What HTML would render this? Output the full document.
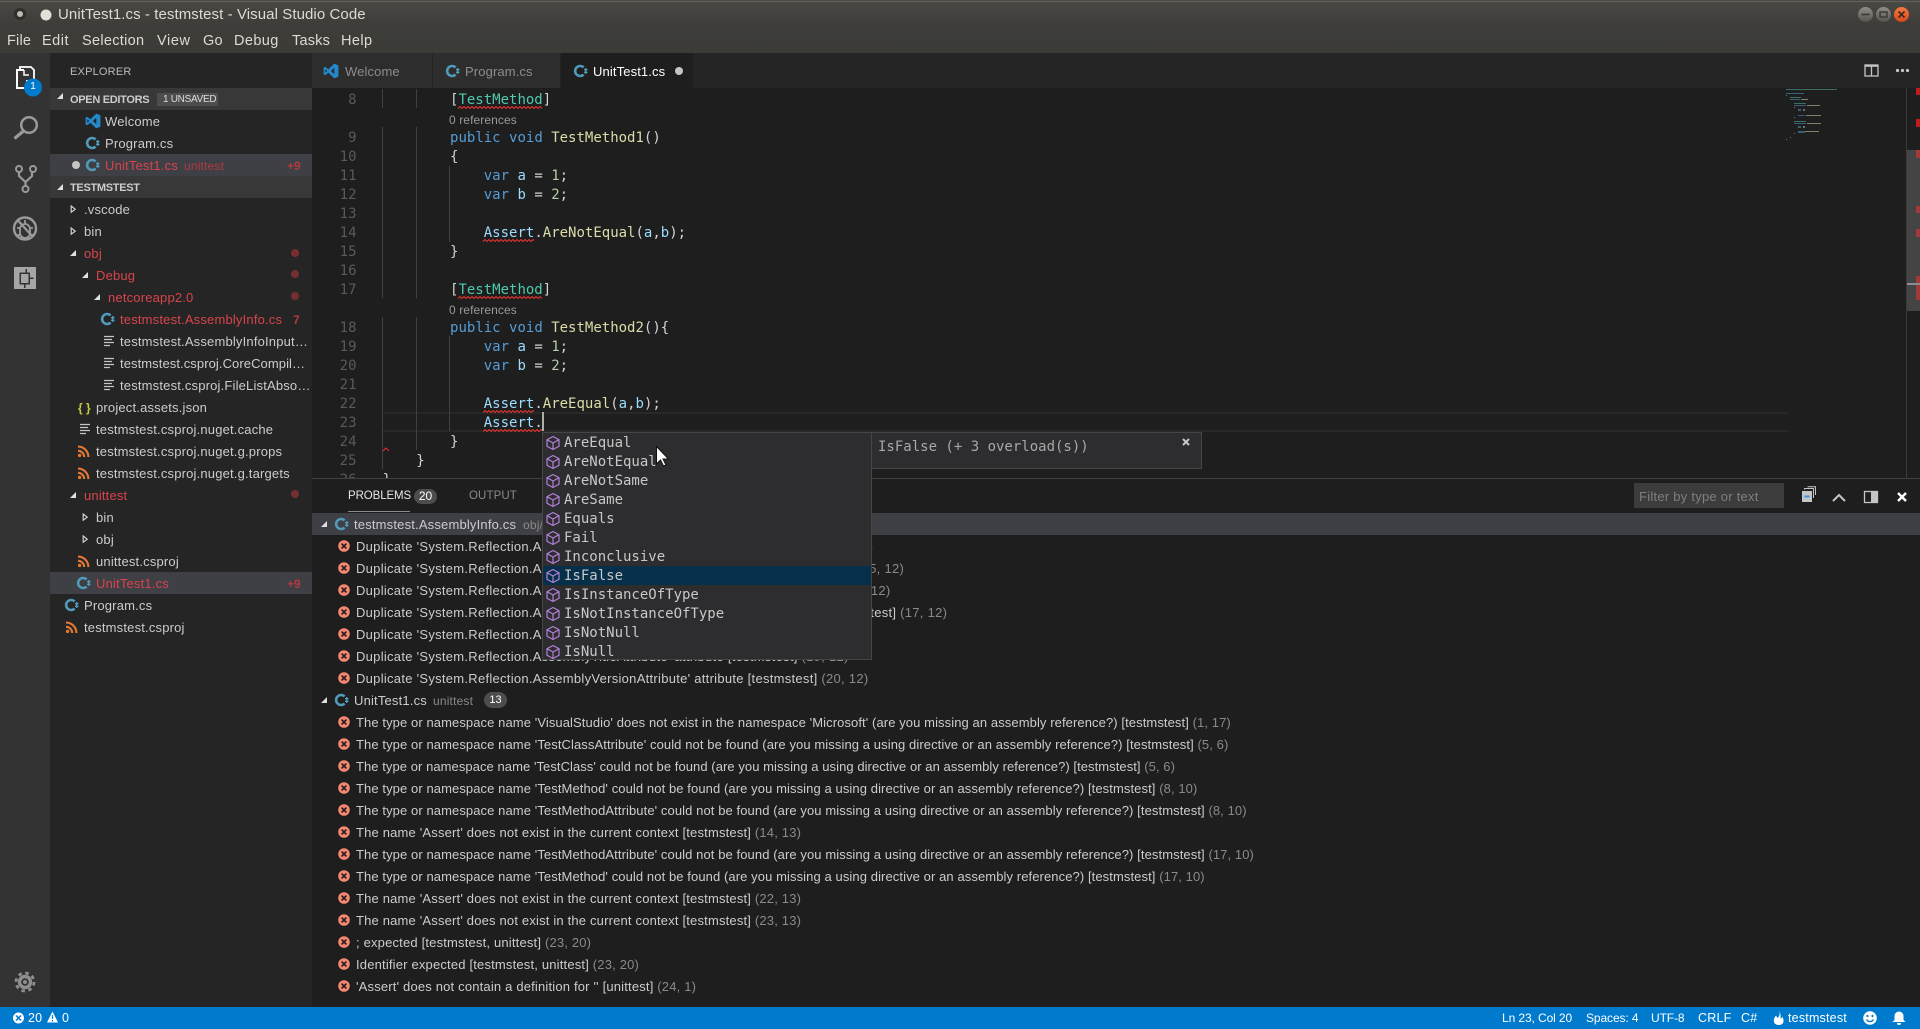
<!DOCTYPE html>
<html><head><meta charset="utf-8"><title>UnitTest1.cs - testmstest - Visual Studio Code</title>
<style>
html,body{margin:0;padding:0;background:#1e1e1e;width:1920px;height:1029px;overflow:hidden}
*{box-sizing:border-box}
body{font-family:"Liberation Sans","DejaVu Sans",sans-serif;font-size:13px;color:#ccc;position:relative}
.b{position:absolute}
.t{position:absolute;white-space:pre;line-height:22px;height:22px;letter-spacing:.18px}
.c{position:absolute;left:382.6px;margin-top:2px;white-space:pre;font:14px/19px "DejaVu Sans Mono","Liberation Mono",monospace;height:19px;color:#d4d4d4}
.n{position:absolute;left:312px;margin-top:2px;width:44.5px;text-align:right;font:14px/19px "DejaVu Sans Mono","Liberation Mono",monospace;height:19px;color:#5a5a5a}
.k{color:#569cd6}.f{color:#dcdcaa}.v{color:#9cdcfe}.u{color:#b5cea8}.g{color:#4ec9b0}
.s{position:absolute;left:564px;margin-top:1px;white-space:pre;font:14px/19px "DejaVu Sans Mono","Liberation Mono",monospace;height:19px;color:#c8c8c8}
.m{color:#dfdbd2;font-size:14.5px;line-height:27px;height:27px;top:28px;letter-spacing:.2px}
.e{color:#d9444b;margin-top:1px}
.h{font-weight:bold;font-size:11px;color:#ccc;letter-spacing:-.3px;margin-top:1px}
.w{color:#ccc;margin-top:1px}
.l{color:#8a8a8a}
.st{color:#fff;font-size:12px;letter-spacing:-.1px}
.sb{color:#fff;font-size:12.5px;letter-spacing:.2px}
.d{letter-spacing:.28px}
.lg{letter-spacing:.09px}
.lh{letter-spacing:.06px}
svg{position:absolute;overflow:visible}
.i{width:16px;height:16px}
.p{margin-top:3px}
.cb{margin-top:1px}
</style></head><body>

<svg width="0" height="0" style="position:absolute">
<defs>
<pattern id="sq" width="4" height="3" patternUnits="userSpaceOnUse"><path d="M-2 .5L0 2.5L2 .5L4 2.5L6 .5" fill="none" stroke="#e8332f" stroke-width="1"/></pattern>
<symbol id="cs" viewBox="0 0 16 16"><path d="M10.6 4.4A5 5 0 1 0 10.6 11.6" fill="none" stroke="#519aba" stroke-width="2.6"/><rect x="11" y="6" width="3.5" height="1.4" fill="#519aba"/><rect x="11" y="8.6" width="3.5" height="1.4" fill="#519aba"/><rect x="12" y="5" width="1.4" height="6" fill="#519aba"/></symbol>
<symbol id="vs" viewBox="0 0 16 16"><path fill-rule="evenodd" fill="#2489ca" d="M11.3 .6L15.4 2.4V13.6L11.3 15.4L5.4 9.8L2.2 12.3L.6 11.4V4.6L2.2 3.7L5.4 6.2ZM11.3 4.8L7.9 8L11.3 11.2ZM2.3 6.2V9.8L4.2 8Z"/></symbol>
<symbol id="rss" viewBox="0 0 16 16"><circle cx="3.6" cy="12.4" r="1.7" fill="#e37933"/><path d="M2 7.8A6.2 6.2 0 0 1 8.2 14M2 3.6A10.4 10.4 0 0 1 12.4 14" fill="none" stroke="#e37933" stroke-width="2.1"/></symbol>
<symbol id="ln" viewBox="0 0 16 16"><path d="M3 3.5H13M3 6.5H11M3 9.5H13M3 12.5H9" stroke="#c5c5c5" stroke-width="1.2" fill="none"/></symbol>
<symbol id="ex" viewBox="0 0 8 8"><path d="M1 7H7V1Z" fill="#e0e0e0"/></symbol>
<symbol id="co" viewBox="0 0 8 8"><path d="M2.2 1L6.2 4.2L2.2 7.2Z" fill="none" stroke="#d0d0d0" stroke-width="1.2"/></symbol>
<symbol id="cu" viewBox="0 0 16 16"><path d="M8 1.5L14 4.7V11.3L8 14.5L2 11.3V4.7ZM2 4.7L8 8L14 4.7M8 8V14.5" fill="none" stroke="#b180d7" stroke-width="1.2"/></symbol>
<symbol id="er" viewBox="0 0 16 16"><circle cx="8" cy="8" r="5.8" fill="#f48771"/><path d="M5.6 5.6L10.4 10.4M10.4 5.6L5.6 10.4" stroke="#1e1e1e" stroke-width="1.6"/></symbol>
</defs>
</svg>

<!-- title + menu -->
<div class="b" style="left:0;top:0;width:1920px;height:53px;background:linear-gradient(#4b4945,#3d3c38 50%,#3c3b37)"></div>
<div class="b" style="left:0;top:1px;width:1920px;height:1px;background:#64625d"></div>
<svg style="left:0;top:0" width="80" height="28"><circle cx="20" cy="14" r="6" fill="#2f2e2b"/><circle cx="20" cy="14" r="3" fill="#bdbab2"/><circle cx="46" cy="15" r="5.5" fill="#e4e0d8"/></svg>
<div class="t" style="left:58px;top:4px;color:#dfdbd2;font-size:15px;letter-spacing:.08px">UnitTest1.cs - testmstest - Visual Studio Code</div>
<div class="t m" style="left:7px">File</div>
<div class="t m" style="left:42px;letter-spacing:.5px">Edit</div>
<div class="t m" style="left:82px;letter-spacing:.3px">Selection</div>
<div class="t m" style="left:157px;letter-spacing:.6px">View</div>
<div class="t m" style="left:203px">Go</div>
<div class="t m" style="left:234px;letter-spacing:.4px">Debug</div>
<div class="t m" style="left:292px">Tasks</div>
<div class="t m" style="left:341px;letter-spacing:.4px">Help</div>
<svg style="left:1850px;top:0" width="70" height="28">
<defs><linearGradient id="gb" x1="0" y1="0" x2="0" y2="1"><stop offset="0" stop-color="#8f8d87"/><stop offset="1" stop-color="#56544f"/></linearGradient><linearGradient id="gr" x1="0" y1="0" x2="0" y2="1"><stop offset="0" stop-color="#f5793f"/><stop offset="1" stop-color="#d9481a"/></linearGradient></defs>
<circle cx="15.5" cy="14.5" r="7.5" fill="url(#gb)"/><path d="M11.5 14.5H19.5" stroke="#3a3935" stroke-width="1.6"/>
<circle cx="33.5" cy="14.5" r="7.5" fill="url(#gb)"/><rect x="30" y="12" width="7" height="5" fill="none" stroke="#3a3935" stroke-width="1.4"/>
<circle cx="51.5" cy="14.5" r="7.5" fill="url(#gr)"/><path d="M48.5 11.5L54.5 17.5M54.5 11.5L48.5 17.5" stroke="#3a2a20" stroke-width="1.6"/>
</svg>

<!-- activity bar -->
<div class="b" style="left:0;top:53px;width:50px;height:954px;background:#333"></div>
<svg style="left:0;top:53px" width="50" height="954">
<g fill="none" stroke="#fff" stroke-width="2">
<path d="M27 27V35H17V17H24"/><path d="M20 17V14H31L34 17V30H29" stroke-width="1.8"/><path d="M24 17V22H29" stroke-width="1.5"/>
</g>
<circle cx="33" cy="34.500" r="9" fill="#007acc"/>
<g fill="none" stroke="#9a9a9a">
<circle cx="29" cy="72" r="7.800" stroke-width="2.500"/><path d="M23.500 78L14.500 85.500" stroke-width="3.200"/>
<circle cx="19" cy="116" r="3" stroke-width="2"/><circle cx="33" cy="116" r="3" stroke-width="2"/><circle cx="25.500" cy="136" r="3" stroke-width="2"/>
<path d="M19 119V123L25.500 129L32 123V119M25.500 129V133" stroke-width="2.200"/>
<circle cx="25" cy="175.500" r="11" stroke-width="2.400"/><path d="M17.500 167L33 184" stroke-width="2.200"/>
<path d="M20 176A5 5 0 0 1 30 176V180A5 5 0 0 1 20 180ZM25 171V167M17 175H20M30 175H33M17 182H20M30 182H33" stroke-width="1.800"/>
</g>
<path fill="#a6a6a6" fill-rule="evenodd" d="M14 214H36V236H14ZM19.500 219.500V231.500H24V235H25.500V231.500H30V226H33.500V224.500H30V219.500H27V216H25.500V219.500Z"/>
<rect x="21" y="221" width="7.500" height="9" fill="#a6a6a6"/>
<g fill="#8f8f8f"><circle cx="25" cy="929" r="7.200"/><circle cx="25" cy="929" r="9" fill="none" stroke="#8f8f8f" stroke-width="2.800" stroke-dasharray="3.500 3.570"/></g><circle cx="25" cy="929" r="3.800" fill="#333"/><circle cx="25" cy="929" r="2" fill="#8f8f8f"/>
</svg>
<div class="t" style="left:28.500px;top:76px;color:#fff;font-size:10px;letter-spacing:0;width:9px;text-align:center">1</div>

<!-- sidebar -->
<div class="b" style="left:50px;top:53px;width:262px;height:954px;background:#252526"></div>
<div class="t" style="left:70px;top:61px;font-size:11px;color:#bbb;letter-spacing:.2px">EXPLORER</div>
<div class="b" style="left:50px;top:88px;width:262px;height:22px;background:#383838"></div>
<svg class="i" style="left:56px;top:92px;width:8px;height:8px"><use href="#ex"/></svg>
<div class="t h" style="left:70px;top:88px">OPEN EDITORS</div>
<div class="b" style="left:157px;top:93px;width:61px;height:13px;background:#4d4d4d"></div>
<div class="t" style="left:163px;top:89px;font-size:10px;color:#ddd;letter-spacing:-.3px">1 UNSAVED</div>

<svg class="i" style="left:85px;top:113px"><use href="#vs"/></svg><div class="t w" style="left:105px;top:110px">Welcome</div>
<svg class="i" style="left:85px;top:135px"><use href="#cs"/></svg><div class="t w" style="left:105px;top:132px">Program.cs</div>
<div class="b" style="left:50px;top:154px;width:262px;height:22px;background:#3f3f46"></div>
<div class="b" style="left:72px;top:161px;width:8px;height:8px;border-radius:50%;background:#c5c5c5"></div>
<svg class="i" style="left:85px;top:157px"><use href="#cs"/></svg><div class="t e" style="left:105px;top:154px">UnitTest1.cs</div>
<div class="t e" style="left:184px;top:154px;font-size:12px;color:#b03a40">unittest</div>
<div class="t e" style="left:287px;top:154px;font-size:12px;color:#b03a40;letter-spacing:0;font-weight:bold">+9</div>

<div class="b" style="left:50px;top:176px;width:262px;height:22px;background:#383838"></div>
<svg class="i" style="left:56px;top:183px;width:8px;height:8px"><use href="#ex"/></svg>
<div class="t h" style="left:70px;top:176px">TESTMSTEST</div>

<svg class="i" style="left:69px;top:205px;width:8px;height:8px"><use href="#co"/></svg><div class="t w" style="left:84px;top:198px">.vscode</div>
<svg class="i" style="left:69px;top:227px;width:8px;height:8px"><use href="#co"/></svg><div class="t w" style="left:84px;top:220px">bin</div>
<svg class="i" style="left:69px;top:249px;width:8px;height:8px"><use href="#ex"/></svg><div class="t e" style="left:84px;top:242px">obj</div>
<svg class="i" style="left:81px;top:271px;width:8px;height:8px"><use href="#ex"/></svg><div class="t e" style="left:96px;top:264px">Debug</div>
<svg class="i" style="left:93px;top:293px;width:8px;height:8px"><use href="#ex"/></svg><div class="t e" style="left:108px;top:286px">netcoreapp2.0</div>
<svg class="i" style="left:100px;top:311px"><use href="#cs"/></svg><div class="t e" style="left:120px;top:308px">testmstest.AssemblyInfo.cs</div>
<svg class="i" style="left:101px;top:333px"><use href="#ln"/></svg><div class="t w" style="left:120px;top:330px;width:192px;overflow:hidden;text-overflow:ellipsis">testmstest.AssemblyInfoInputs.cache</div>
<svg class="i" style="left:101px;top:355px"><use href="#ln"/></svg><div class="t w" style="left:120px;top:352px;width:192px;overflow:hidden;text-overflow:ellipsis;letter-spacing:.08px">testmstest.csproj.CoreCompileInputs.cache</div>
<svg class="i" style="left:101px;top:377px"><use href="#ln"/></svg><div class="t w" style="left:120px;top:374px;width:192px;overflow:hidden;text-overflow:ellipsis">testmstest.csproj.FileListAbsolute.txt</div>
<div class="t" style="left:78px;top:397px;color:#cbcb41;font-weight:bold;letter-spacing:0;font-size:12px">{ }</div><div class="t w" style="left:96px;top:396px">project.assets.json</div>
<svg class="i" style="left:77px;top:421px"><use href="#ln"/></svg><div class="t w" style="left:96px;top:418px">testmstest.csproj.nuget.cache</div>
<svg class="i" style="left:76px;top:443px"><use href="#rss"/></svg><div class="t w" style="left:96px;top:440px">testmstest.csproj.nuget.g.props</div>
<svg class="i" style="left:76px;top:465px"><use href="#rss"/></svg><div class="t w" style="left:96px;top:462px">testmstest.csproj.nuget.g.targets</div>
<svg class="i" style="left:69px;top:491px;width:8px;height:8px"><use href="#ex"/></svg><div class="t e" style="left:84px;top:484px">unittest</div>
<svg class="i" style="left:81px;top:513px;width:8px;height:8px"><use href="#co"/></svg><div class="t w" style="left:96px;top:506px">bin</div>
<svg class="i" style="left:81px;top:535px;width:8px;height:8px"><use href="#co"/></svg><div class="t w" style="left:96px;top:528px">obj</div>
<svg class="i" style="left:76px;top:553px"><use href="#rss"/></svg><div class="t w" style="left:96px;top:550px">unittest.csproj</div>
<div class="b" style="left:50px;top:572px;width:262px;height:22px;background:#3f3f46"></div>
<svg class="i" style="left:76px;top:575px"><use href="#cs"/></svg><div class="t e" style="left:96px;top:572px">UnitTest1.cs</div>
<div class="t e" style="left:287px;top:572px;font-size:12px;color:#b03a40;letter-spacing:0;font-weight:bold">+9</div>
<svg class="i" style="left:64px;top:597px"><use href="#cs"/></svg><div class="t w" style="left:84px;top:594px">Program.cs</div>
<svg class="i" style="left:64px;top:619px"><use href="#rss"/></svg><div class="t w" style="left:84px;top:616px">testmstest.csproj</div>
<div class="b" style="left:291px;top:249px;width:8px;height:8px;border-radius:50%;background:#772e30"></div>
<div class="b" style="left:291px;top:270px;width:8px;height:8px;border-radius:50%;background:#772e30"></div>
<div class="b" style="left:291px;top:292px;width:8px;height:8px;border-radius:50%;background:#772e30"></div>
<div class="t e" style="left:293px;top:308px;font-size:12px;color:#b03a40;letter-spacing:0;font-weight:bold">7</div>
<div class="b" style="left:291px;top:490px;width:8px;height:8px;border-radius:50%;background:#772e30"></div>

<!-- tabs -->
<div class="b" style="left:312px;top:53px;width:1608px;height:35px;background:#252526"></div>
<div class="b" style="left:312px;top:53px;width:121px;height:35px;background:#2d2d2d;border-right:1px solid #252526"></div>
<div class="b" style="left:433px;top:53px;width:128px;height:35px;background:#2d2d2d;border-right:1px solid #252526"></div>
<div class="b" style="left:561px;top:53px;width:132px;height:35px;background:#1e1e1e"></div>
<svg class="i" style="left:323px;top:63px"><use href="#vs"/></svg><div class="t" style="left:345px;top:61px;color:#8d8d8d;letter-spacing:.12px">Welcome</div>
<svg class="i" style="left:445px;top:63px"><use href="#cs"/></svg><div class="t" style="left:465px;top:61px;color:#8d8d8d;letter-spacing:.12px">Program.cs</div>
<svg class="i" style="left:573px;top:63px"><use href="#cs"/></svg><div class="t" style="left:593px;top:61px;color:#fff;letter-spacing:.12px">UnitTest1.cs</div>
<div class="b" style="left:675px;top:67px;width:8px;height:8px;border-radius:50%;background:#c5c5c5"></div>
<svg style="left:1860px;top:60px" width="50" height="20"><rect x="5" y="5" width="13" height="11" fill="none" stroke="#c5c5c5" stroke-width="1.300"/><path d="M11.500 5V16" stroke="#c5c5c5" stroke-width="1.300"/><rect x="5" y="5" width="13" height="1.800" fill="#c5c5c5"/><circle cx="37.500" cy="10.500" r="1.600" fill="#c5c5c5"/><circle cx="42.500" cy="10.500" r="1.600" fill="#c5c5c5"/><circle cx="47.500" cy="10.500" r="1.600" fill="#c5c5c5"/></svg>

<!-- editor -->
<div class="b" style="left:312px;top:88px;width:1608px;height:390px;background:#1e1e1e"></div>
<div class="b" style="left:382px;top:412px;width:1406px;height:20px;border-top:2px solid #282828;border-bottom:2px solid #282828"></div>
<svg style="left:0;top:0" width="1920" height="1029">
<g fill="#404040">
<rect x="382" y="89" width="1" height="19"/><rect x="416" y="89" width="1" height="19"/>
<rect x="382" y="127" width="1" height="171"/><rect x="416" y="127" width="1" height="171"/>
<rect x="382" y="317" width="1" height="152"/><rect x="416" y="317" width="1" height="133"/>
<rect x="449" y="166" width="1" height="76"/><rect x="449" y="336" width="1" height="95"/>
</g>
<g transform="translate(458,106)"><rect width="84" height="3" fill="url(#sq)"/></g>
<g transform="translate(483,239)"><rect width="51" height="3" fill="url(#sq)"/></g>
<g transform="translate(458,296)"><rect width="84" height="3" fill="url(#sq)"/></g>
<g transform="translate(483,410)"><rect width="51" height="3" fill="url(#sq)"/></g>
<g transform="translate(483,429)"><rect width="59" height="3" fill="url(#sq)"/></g>
<path d="M383 451L386 448L389 451" fill="none" stroke="#e8332f"/>
</svg>
<div class="n" style="top:89px">8</div><div class="c" style="top:89px">        [<span class="g">TestMethod</span>]</div>
<div class="t" style="left:449px;top:109px;font-size:12px;color:#999;letter-spacing:.1px">0 references</div>
<div class="n" style="top:127px">9</div><div class="c" style="top:127px">        <span class="k">public</span> <span class="k">void</span> <span class="f">TestMethod1</span>()</div>
<div class="n" style="top:146px">10</div><div class="c" style="top:146px">        {</div>
<div class="n" style="top:165px">11</div><div class="c" style="top:165px">            <span class="k">var</span> <span class="v">a</span> = <span class="u">1</span>;</div>
<div class="n" style="top:184px">12</div><div class="c" style="top:184px">            <span class="k">var</span> <span class="v">b</span> = <span class="u">2</span>;</div>
<div class="n" style="top:203px">13</div>
<div class="n" style="top:222px">14</div><div class="c" style="top:222px">            <span class="v">Assert</span>.<span class="f">AreNotEqual</span>(<span class="v">a</span>,<span class="v">b</span>);</div>
<div class="n" style="top:241px">15</div><div class="c" style="top:241px">        }</div>
<div class="n" style="top:260px">16</div>
<div class="n" style="top:279px">17</div><div class="c" style="top:279px">        [<span class="g">TestMethod</span>]</div>
<div class="t" style="left:449px;top:299px;font-size:12px;color:#999;letter-spacing:.1px">0 references</div>
<div class="n" style="top:317px">18</div><div class="c" style="top:317px">        <span class="k">public</span> <span class="k">void</span> <span class="f">TestMethod2</span>(){</div>
<div class="n" style="top:336px">19</div><div class="c" style="top:336px">            <span class="k">var</span> <span class="v">a</span> = <span class="u">1</span>;</div>
<div class="n" style="top:355px">20</div><div class="c" style="top:355px">            <span class="k">var</span> <span class="v">b</span> = <span class="u">2</span>;</div>
<div class="n" style="top:374px">21</div>
<div class="n" style="top:393px">22</div><div class="c" style="top:393px">            <span class="v">Assert</span>.<span class="f">AreEqual</span>(<span class="v">a</span>,<span class="v">b</span>);</div>
<div class="n" style="top:412px">23</div><div class="c" style="top:412px">            <span class="v">Assert</span>.</div>
<div class="n" style="top:431px">24</div><div class="c" style="top:431px">        }</div>
<div class="n" style="top:450px">25</div><div class="c" style="top:450px">    }</div>
<div class="n" style="top:469px">26</div><div class="c" style="top:469px">}</div>
<div class="b" style="left:541.500px;top:412px;width:2px;height:19px;background:#aeafad"></div>

<!-- minimap -->
<svg style="left:1785px;top:88px" width="70" height="60" opacity=".65">
<g fill="#4e9a8c"><rect x="1" y="1" width="51" height="1"/><rect x="5" y="9" width="11" height="1"/><rect x="9" y="15" width="12" height="1"/><rect x="9" y="33" width="12" height="1"/></g>
<g fill="#4a7fa8"><rect x="1" y="5" width="18" height="1"/><rect x="5" y="11" width="10" height="1"/><rect x="9" y="17" width="12" height="1"/><rect x="9" y="35" width="12" height="1"/><rect x="13" y="21" width="3" height="2"/><rect x="13" y="38" width="3" height="2"/><rect x="13" y="27" width="7" height="1"/><rect x="13" y="43" width="7" height="2"/></g>
<g fill="#b8b88e"><rect x="16" y="11" width="7" height="1"/><rect x="22" y="17" width="13" height="1"/><rect x="22" y="35" width="14" height="1"/><rect x="21" y="27" width="15" height="1"/><rect x="20" y="43" width="14" height="1"/></g>
<g fill="#9a9a9a"><rect x="9" y="19" width="1" height="1"/><rect x="9" y="29" width="1" height="1"/><rect x="9" y="45" width="1" height="1"/><rect x="5" y="49" width="1" height="1"/><rect x="1" y="51" width="1" height="1"/><rect x="1" y="7" width="1" height="1"/><rect x="18" y="21" width="2" height="2"/><rect x="18" y="38" width="2" height="2"/></g>
</svg>
<!-- overview ruler -->
<div class="b" style="left:1906px;top:88px;width:1px;height:390px;background:#3a3a3a"></div>
<div class="b" style="left:1907px;top:150px;width:13px;height:161px;background:#444"></div>
<svg style="left:1906px;top:88px" width="14" height="390"><g fill="#c01c1c"><rect x="10" y="0" width="4" height="7"/><rect x="10" y="31" width="4" height="8"/></g><g fill="#a33a3a"><rect x="10" y="62" width="4" height="8"/><rect x="10" y="118" width="4" height="7"/><rect x="10" y="141" width="4" height="8"/><rect x="10" y="188" width="4" height="24"/></g><rect x="1" y="195" width="13" height="2" fill="#8c8c8c"/></svg>

<!-- panel -->
<div class="b" style="left:312px;top:478px;width:1608px;height:529px;background:#1e1e1e;border-top:1px solid #414141"></div>
<div class="t" style="left:348px;top:485px;font-size:11.5px;color:#e7e7e7;letter-spacing:-.1px">PROBLEMS</div>
<div class="b" style="left:414px;top:489px;width:23px;height:15px;border-radius:8px;background:#4d4d4d;color:#fff;font-size:12px;line-height:15px;text-align:center">20</div>
<div class="b" style="left:348px;top:511px;width:62px;height:1px;background:#8a8a8a"></div>
<div class="t" style="left:469px;top:485px;font-size:11.5px;color:#8a8a8a;letter-spacing:.1px">OUTPUT</div>
<div class="b" style="left:1634px;top:483px;width:150px;height:25px;background:#3c3c3c"></div>
<div class="t" style="left:1639px;top:486px;color:#7f7f7f;letter-spacing:.25px">Filter by type or text</div>
<svg style="left:1800px;top:486px" width="115" height="24">
<rect x="2" y="5" width="10" height="11" fill="#c5c5c5"/><rect x="4.500" y="9.500" width="5" height="2" fill="#3794e5"/><path d="M4.500 3.500V2.500H13.500V12M7.500 .8H15.500V9" fill="none" stroke="#c5c5c5" stroke-width="1"/>
<path d="M33 15L39 9L45 15" fill="none" stroke="#c5c5c5" stroke-width="2"/>
<rect x="64.500" y="5.500" width="13" height="11" fill="none" stroke="#c5c5c5" stroke-width="1.300"/><rect x="71" y="5.500" width="6.500" height="11" fill="#c5c5c5"/>
<path d="M98 7L106 15M106 7L98 15" stroke="#fff" stroke-width="2.400"/>
</svg>

<div class="b" style="left:312px;top:513px;width:1608px;height:22px;background:#3f3f46"></div>
<svg class="i" style="left:320px;top:520px;width:8px;height:8px"><use href="#ex"/></svg>
<svg class="i" style="left:334px;top:516px"><use href="#cs"/></svg>
<div class="t w" style="left:354px;top:513px">testmstest.AssemblyInfo.cs</div>
<div class="t l" style="left:523px;top:514px;font-size:12px">obj/Debug/netcoreapp2.0</div>

<svg class="i p" style="left:336px;top:535px"><use href="#er"/></svg><div class="t w d" style="left:356px;top:535px">Duplicate 'System.Reflection.AssemblyCompanyAttribute' attribute [testmstest] <span class="l">(6, 12)</span></div>
<svg class="i p" style="left:336px;top:557px"><use href="#er"/></svg><div class="t w d" style="left:356px;top:557px">Duplicate 'System.Reflection.AssemblyConfigurationAttribute' attribute [testmstest] <span class="l">(15, 12)</span></div>
<svg class="i p" style="left:336px;top:579px"><use href="#er"/></svg><div class="t w d" style="left:356px;top:579px">Duplicate 'System.Reflection.AssemblyFileVersionAttribute' attribute [testmstest] <span class="l">(16, 12)</span></div>
<svg class="i p" style="left:336px;top:601px"><use href="#er"/></svg><div class="t w d" style="left:356px;top:601px">Duplicate 'System.Reflection.AssemblyInformationalVersionAttribute' attribute [testmstest] <span class="l">(17, 12)</span></div>
<svg class="i p" style="left:336px;top:623px"><use href="#er"/></svg><div class="t w d" style="left:356px;top:623px">Duplicate 'System.Reflection.AssemblyProductAttribute' attribute [testmstest] <span class="l">(18, 12)</span></div>
<svg class="i p" style="left:336px;top:645px"><use href="#er"/></svg><div class="t w d" style="left:356px;top:645px">Duplicate 'System.Reflection.AssemblyTitleAttribute' attribute [testmstest] <span class="l">(19, 12)</span></div>
<svg class="i p" style="left:336px;top:667px"><use href="#er"/></svg><div class="t w d" style="left:356px;top:667px">Duplicate 'System.Reflection.AssemblyVersionAttribute' attribute [testmstest] <span class="l">(20, 12)</span></div>

<svg class="i" style="left:320px;top:696px;width:8px;height:8px"><use href="#ex"/></svg>
<svg class="i" style="left:334px;top:692px"><use href="#cs"/></svg>
<div class="t w" style="left:354px;top:689px">UnitTest1.cs</div>
<div class="t l" style="left:433px;top:690px;font-size:12px">unittest</div>
<div class="b" style="left:484px;top:692px;width:23px;height:16px;border-radius:8px;background:#4d4d4d;color:#fff;font-size:11px;line-height:16px;text-align:center">13</div>

<svg class="i p" style="left:336px;top:711px"><use href="#er"/></svg><div class="t w lg" style="left:356px;top:711px">The type or namespace name 'VisualStudio' does not exist in the namespace 'Microsoft' (are you missing an assembly reference?) [testmstest] <span class="l">(1, 17)</span></div>
<svg class="i p" style="left:336px;top:733px"><use href="#er"/></svg><div class="t w lg" style="left:356px;top:733px">The type or namespace name 'TestClassAttribute' could not be found (are you missing a using directive or an assembly reference?) [testmstest] <span class="l">(5, 6)</span></div>
<svg class="i p" style="left:336px;top:755px"><use href="#er"/></svg><div class="t w lh" style="left:356px;top:755px">The type or namespace name 'TestClass' could not be found (are you missing a using directive or an assembly reference?) [testmstest] <span class="l">(5, 6)</span></div>
<svg class="i p" style="left:336px;top:777px"><use href="#er"/></svg><div class="t w lg" style="left:356px;top:777px">The type or namespace name 'TestMethod' could not be found (are you missing a using directive or an assembly reference?) [testmstest] <span class="l">(8, 10)</span></div>
<svg class="i p" style="left:336px;top:799px"><use href="#er"/></svg><div class="t w lg" style="left:356px;top:799px">The type or namespace name 'TestMethodAttribute' could not be found (are you missing a using directive or an assembly reference?) [testmstest] <span class="l">(8, 10)</span></div>
<svg class="i p" style="left:336px;top:821px"><use href="#er"/></svg><div class="t w" style="left:356px;top:821px">The name 'Assert' does not exist in the current context [testmstest] <span class="l">(14, 13)</span></div>
<svg class="i p" style="left:336px;top:843px"><use href="#er"/></svg><div class="t w lg" style="left:356px;top:843px">The type or namespace name 'TestMethodAttribute' could not be found (are you missing a using directive or an assembly reference?) [testmstest] <span class="l">(17, 10)</span></div>
<svg class="i p" style="left:336px;top:865px"><use href="#er"/></svg><div class="t w lg" style="left:356px;top:865px">The type or namespace name 'TestMethod' could not be found (are you missing a using directive or an assembly reference?) [testmstest] <span class="l">(17, 10)</span></div>
<svg class="i p" style="left:336px;top:887px"><use href="#er"/></svg><div class="t w" style="left:356px;top:887px">The name 'Assert' does not exist in the current context [testmstest] <span class="l">(22, 13)</span></div>
<svg class="i p" style="left:336px;top:909px"><use href="#er"/></svg><div class="t w" style="left:356px;top:909px">The name 'Assert' does not exist in the current context [testmstest] <span class="l">(23, 13)</span></div>
<svg class="i p" style="left:336px;top:931px"><use href="#er"/></svg><div class="t w" style="left:356px;top:931px">; expected [testmstest, unittest] <span class="l">(23, 20)</span></div>
<svg class="i p" style="left:336px;top:953px"><use href="#er"/></svg><div class="t w" style="left:356px;top:953px">Identifier expected [testmstest, unittest] <span class="l">(23, 20)</span></div>
<svg class="i p" style="left:336px;top:975px"><use href="#er"/></svg><div class="t w" style="left:356px;top:975px">'Assert' does not contain a definition for '' [unittest] <span class="l">(24, 1)</span></div>

<!-- suggest widget -->
<div class="b" style="left:542px;top:432px;width:330px;height:228px;background:#2d2d30;border:1px solid #454545"></div>
<div class="b" style="left:871px;top:432px;width:331px;height:37px;background:#2d2d30;border:1px solid #454545"></div>
<div class="b" style="left:543px;top:566px;width:328px;height:19px;background:#062f4a"></div>
<div class="s" style="top:433px">AreEqual</div>
<div class="s" style="top:452px">AreNotEqual</div>
<div class="s" style="top:471px">AreNotSame</div>
<div class="s" style="top:490px">AreSame</div>
<div class="s" style="top:509px">Equals</div>
<div class="s" style="top:528px">Fail</div>
<div class="s" style="top:547px">Inconclusive</div>
<div class="s" style="top:566px">IsFalse</div>
<div class="s" style="top:585px">IsInstanceOfType</div>
<div class="s" style="top:604px">IsNotInstanceOfType</div>
<div class="s" style="top:623px">IsNotNull</div>
<div class="s" style="top:642px">IsNull</div>
<svg class="i cb" style="left:545px;top:434px"><use href="#cu"/></svg>
<svg class="i cb" style="left:545px;top:453px"><use href="#cu"/></svg>
<svg class="i cb" style="left:545px;top:472px"><use href="#cu"/></svg>
<svg class="i cb" style="left:545px;top:491px"><use href="#cu"/></svg>
<svg class="i cb" style="left:545px;top:510px"><use href="#cu"/></svg>
<svg class="i cb" style="left:545px;top:529px"><use href="#cu"/></svg>
<svg class="i cb" style="left:545px;top:548px"><use href="#cu"/></svg>
<svg class="i cb" style="left:545px;top:567px"><use href="#cu"/></svg>
<svg class="i cb" style="left:545px;top:586px"><use href="#cu"/></svg>
<svg class="i cb" style="left:545px;top:605px"><use href="#cu"/></svg>
<svg class="i cb" style="left:545px;top:624px"><use href="#cu"/></svg>
<svg class="i cb" style="left:545px;top:643px"><use href="#cu"/></svg>
<div class="s" style="left:878px;top:437px;color:#a8a8a8">IsFalse (+ 3 overload(s))</div>
<svg style="left:1180px;top:436px" width="12" height="12"><path d="M3 3L9 9M9 3L3 9" stroke="#c5c5c5" stroke-width="2"/></svg>
<svg style="left:650px;top:440px" width="30" height="30"><path d="M6.500 6.500V24L10.500 20L13.500 26L16 25L13 19L18.500 19Z" fill="#fff" stroke="#111" stroke-width="1"/></svg>

<!-- status bar -->
<div class="b" style="left:0;top:1007px;width:1920px;height:22px;background:#007acc"></div>
<svg style="left:0;top:1007px" width="1920" height="22">
<circle cx="18.500" cy="11" r="5.500" fill="#fff"/><path d="M16 8.500L21 13.500M21 8.500L16 13.500" stroke="#007acc" stroke-width="1.500"/>
<path d="M52.500 4.500L58 15.500H47Z" fill="#fff"/><path d="M52.500 8V12M52.500 13V14.500" stroke="#007acc" stroke-width="1.200"/>
<path d="M1778 3.500C1781.500 7 1778.500 9 1778 11C1777 10.500 1776.500 9.500 1776 8.500C1773 12 1772.500 17.500 1778.500 18C1784.500 18 1784.500 12.500 1782 9.500C1782 11.500 1781 12 1780.500 11C1781 8 1780.500 5.500 1778 3.500Z" fill="#fff"/>
<circle cx="1870" cy="11" r="6.800" fill="#fff"/><circle cx="1867.500" cy="9" r="1.100" fill="#007acc"/><circle cx="1872.500" cy="9" r="1.100" fill="#007acc"/><path d="M1866.500 12.500A4 4 0 0 0 1873.500 12.500" fill="none" stroke="#007acc" stroke-width="1.300"/>
<path d="M1899 4.500A4.500 4.500 0 0 1 1903.500 9V13L1905.500 15H1892.500L1894.500 13V9A4.500 4.500 0 0 1 1899 4.500ZM1897 16H1901A2 2 0 0 1 1897 16Z" fill="#fff"/>
</svg>
<div class="t sb" style="left:28px;top:1007px">20</div>
<div class="t sb" style="left:62px;top:1007px">0</div>
<div class="t st" style="left:1502px;top:1007px">Ln 23, Col 20</div>
<div class="t st" style="left:1586px;top:1007px">Spaces: 4</div>
<div class="t st" style="left:1651px;top:1007px">UTF-8</div>
<div class="t sb" style="left:1698px;top:1007px">CRLF</div>
<div class="t sb" style="left:1741px;top:1007px">C#</div>
<div class="t sb" style="left:1788px;top:1007px">testmstest</div>
</body></html>
